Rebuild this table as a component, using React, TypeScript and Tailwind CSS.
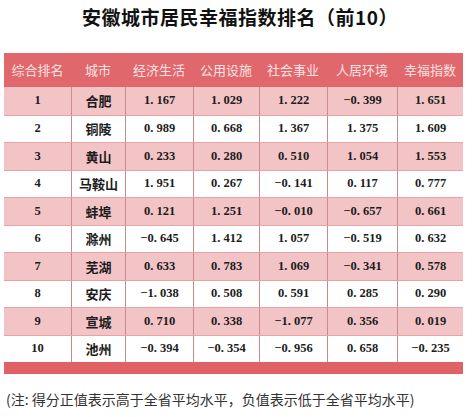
import React from "react";

const rows: string[][] = [
  ["1", "合肥", "1. 167", "1. 029", "1. 222", "−0. 399", "1. 651"],
  ["2", "铜陵", "0. 989", "0. 668", "1. 367", "1. 375", "1. 609"],
  ["3", "黄山", "0. 233", "0. 280", "0. 510", "1. 054", "1. 553"],
  ["4", "马鞍山", "1. 951", "0. 267", "−0. 141", "0. 117", "0. 777"],
  ["5", "蚌埠", "0. 121", "1. 251", "−0. 010", "−0. 657", "0. 661"],
  ["6", "滁州", "−0. 645", "1. 412", "1. 057", "−0. 519", "0. 632"],
  ["7", "芜湖", "0. 633", "0. 783", "1. 069", "−0. 341", "0. 578"],
  ["8", "安庆", "−1. 038", "0. 508", "0. 591", "0. 285", "0. 290"],
  ["9", "宣城", "0. 710", "0. 338", "−1. 077", "0. 356", "0. 019"],
  ["10", "池州", "−0. 394", "−0. 354", "−0. 956", "0. 658", "−0. 235"],
];

const headers = ["综合排名", "城市", "经济生活", "公用设施", "社会事业", "人居环境", "幸福指数"];

const gridCols = "grid grid-cols-[67px_54px_68px_66px_68px_70px_66px]";

export default function App() {
  return (
    <div className="w-[474px] h-[417px] bg-white flex flex-col overflow-hidden">
      <div className="h-[53px] flex justify-center pt-[4px] pl-[6px]">
        <div
          className="text-[19px] leading-[25px] font-bold tracking-[0.5px] text-[#111]"
          style={{ fontFamily: '"Noto Sans CJK SC", sans-serif' }}
        >
          安徽城市居民幸福指数排名（前10）
        </div>
      </div>
      <div className="ml-[4px] w-[459px] flex flex-col">
        <div
          className={`${gridCols} h-[34px] bg-[#e0676b] items-center text-[13px] text-[#fbe1e1]`}
          style={{ fontFamily: '"Noto Sans CJK SC", serif' }}
        >
          {headers.map((h) => (
            <div key={h} className="text-center">
              {h}
            </div>
          ))}
        </div>
        {rows.map((r, i) => (
          <div
            key={i}
            className={`${gridCols} h-[27.5px] ${
              i % 2 === 0 ? "bg-[#f2c4c6]" : "bg-white"
            } ${i === 0 ? "" : "border-t border-[#e6a2a5]"}`}
          >
            {r.map((c, j) => (
              <div
                key={j}
                className={`flex items-center justify-center text-[#1c1c1c] ${
                  j === 0 ? "" : "border-l border-[#c98a8e]"
                } ${j === 1 ? "text-[13px] font-bold" : "text-[12.5px] font-bold"}`}
                style={{
                  fontFamily:
                    j === 1
                      ? '"Noto Sans CJK SC", sans-serif'
                      : '"Liberation Serif", serif',
                }}
              >
                {c}
              </div>
            ))}
          </div>
        ))}
        <div className="h-[12px] bg-[#e06266]" />
      </div>
      <div
        className="mt-[15px] pl-[6px] text-[14px] leading-[20px] text-[#333]"
        style={{ fontFamily: '"Noto Sans CJK SC", sans-serif' }}
      >
        (注: 得分正值表示高于全省平均水平，负值表示低于全省平均水平)
      </div>
    </div>
  );
}
